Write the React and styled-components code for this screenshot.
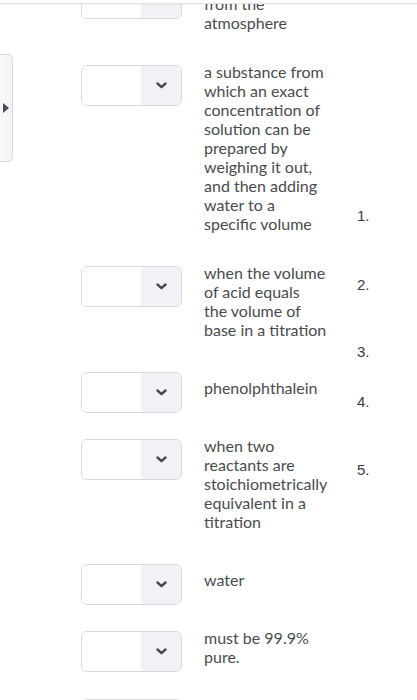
import React from "react";
import styled, { createGlobalStyle } from "styled-components";

const GlobalStyle = createGlobalStyle`
  html, body {
    margin: 0;
    padding: 0;
    background: #ffffff;
  }
  body {
    font-family: Lato, "Open Sans", sans-serif;
    color: #494c4e;
  }
`;

const Page = styled.div`
  height: 700px;
  width: 417px;
  display: flex;
  flex-direction: column;
  overflow: hidden;
  background: #fff;
`;

const TopEdge = styled.div`
  flex: none;
  height: 3px;
  background: #fff;
  border-bottom: 1px solid #e2e4e7;
  box-shadow: 0 1px 2px rgba(0, 0, 0, 0.04);
  position: relative;
  z-index: 2;
`;

const Body = styled.div`
  flex: 1;
  display: flex;
  flex-direction: row;
  overflow: hidden;
`;

const Gutter = styled.div`
  flex: none;
  width: 81px;
`;

const SideTab = styled.div`
  margin-top: 50px;
  margin-left: -5px;
  width: 18px;
  height: 108px;
  box-sizing: border-box;
  border: 1px solid #d3d9e3;
  border-radius: 5px;
  background: linear-gradient(to right, #f9fafb, #f1f2f4);
  display: flex;
  align-items: center;
  padding-left: 7px;
`;

const Triangle = styled.span`
  width: 0;
  height: 0;
  border-top: 5px solid transparent;
  border-bottom: 5px solid transparent;
  border-left: 6px solid #494c4e;
`;

const Content = styled.div`
  margin-top: -26px;
  display: flex;
  flex-direction: row;
  align-items: flex-start;
`;

const Rows = styled.div`
  flex: none;
  width: 276px;
  display: flex;
  flex-direction: column;
  gap: 26px;
`;

const Row = styled.div`
  display: flex;
  flex-direction: row;
  align-items: flex-start;
  gap: 22px;
`;

const Select = styled.div`
  flex: none;
  width: 101px;
  height: 41px;
  box-sizing: border-box;
  border: 1px solid #d6dae0;
  border-radius: 6px;
  display: flex;
  overflow: hidden;
  background: #fff;
`;

const SelectValue = styled.div`
  width: 59px;
  background: #fff;
`;

const SelectArrow = styled.div`
  flex: 1;
  background: #f1f2f5;
  display: flex;
  align-items: center;
  justify-content: center;
`;

const Term = styled.div`
  width: 136px;
  font-size: 16px;
  line-height: 19px;
  margin-top: ${(p) => (p.$single ? "6px" : "-3px")};
  padding-bottom: 7px;
  white-space: nowrap;
`;

const Numbers = styled.ol`
  list-style: none;
  margin: 0;
  padding: 228px 0 0 0;
  font-family: "Liberation Sans", Arial, sans-serif;
  font-size: 15px;
  color: #3a3c3e;
`;

const Num = styled.li`
  line-height: 19px;
  margin-top: ${(p) => p.$gap}px;
`;

const Chevron = () => (
  <svg width="11" height="7" viewBox="0 0 11 7">
    <path
      d="M1.5 1.5 L5.5 5.2 L9.5 1.5"
      fill="none"
      stroke="#4a4d50"
      strokeWidth="2.4"
      strokeLinecap="round"
      strokeLinejoin="round"
    />
  </svg>
);

const terms = [
  ["absorbs water", "from the", "atmosphere"],
  [
    "a substance from",
    "which an exact",
    "concentration of",
    "solution can be",
    "prepared by",
    "weighing it out,",
    "and then adding",
    "water to a",
    "specific volume",
  ],
  ["when the volume", "of acid equals", "the volume of", "base in a titration"],
  ["phenolphthalein"],
  [
    "when two",
    "reactants are",
    "stoichiometrically",
    "equivalent in a",
    "titration",
  ],
  ["water"],
  ["must be 99.9%", "pure."],
  [],
];

const numbers = [
  { label: "1.", gap: 0 },
  { label: "2.", gap: 50 },
  { label: "3.", gap: 48 },
  { label: "4.", gap: 31 },
  { label: "5.", gap: 49 },
];

export default function App() {
  return (
    <Page>
      <GlobalStyle />
      <TopEdge />
      <Body>
        <Gutter>
          <SideTab>
            <Triangle />
          </SideTab>
        </Gutter>
        <Content>
          <Rows>
            {terms.map((lines, i) => (
              <Row key={i}>
                <Select>
                  <SelectValue />
                  <SelectArrow>
                    <Chevron />
                  </SelectArrow>
                </Select>
                <Term $single={lines.length === 1}>
                  {lines.map((line, j) => (
                    <React.Fragment key={j}>
                      {j > 0 && <br />}
                      {line}
                    </React.Fragment>
                  ))}
                </Term>
              </Row>
            ))}
          </Rows>
          <Numbers>
            {numbers.map((n) => (
              <Num key={n.label} $gap={n.gap}>
                {n.label}
              </Num>
            ))}
          </Numbers>
        </Content>
      </Body>
    </Page>
  );
}
